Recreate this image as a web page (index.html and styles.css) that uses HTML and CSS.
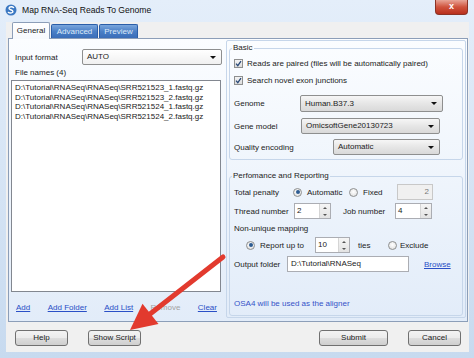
FILE: index.html
```html
<!DOCTYPE html>
<html lang="en">
<head>
    <meta charset="UTF-8">
    <title>Map RNA-Seq Reads To Genome</title>
    <link rel="stylesheet" href="styles.css">
</head>
<body>
    <div class="window">
        <div class="titlebar">
            <svg class="app-icon" width="12" height="12" viewBox="0 0 12 12">
                <circle cx="6" cy="6" r="5.5" fill="#3b78c2"/>
                <path d="M8.6 3.6 C7.4 2.3 4.6 2.4 4 4.2 C3.5 5.8 7.6 5.6 7.9 7.3 C8.2 9 5.2 9.6 3.4 8.4" fill="none" stroke="#fff" stroke-width="1.4" stroke-linecap="round"/>
            </svg>
            <span class="title">Map RNA-Seq Reads To Genome</span>
            <div class="close-btn">x</div>
        </div>

        <div class="client">
            <div class="tabs">
                <div class="tab tab-active">General</div>
                <div class="tab tab-advanced">Advanced</div>
                <div class="tab tab-preview">Preview</div>
            </div>

            <div class="tab-page">
                <div class="left-col">
                    <div class="format-row">
                        <span class="field-label">Input format</span>
                        <div class="combo combo-auto"><span>AUTO</span><i class="drop"></i></div>
                    </div>
                    <div class="files-label">File names (4)</div>
                    <div class="listbox">
                        <div>D:\Tutorial\RNASeq\RNASeq\SRR521523_1.fastq.gz</div>
                        <div>D:\Tutorial\RNASeq\RNASeq\SRR521523_2.fastq.gz</div>
                        <div>D:\Tutorial\RNASeq\RNASeq\SRR521524_1.fastq.gz</div>
                        <div>D:\Tutorial\RNASeq\RNASeq\SRR521524_2.fastq.gz</div>
                    </div>
                    <div class="links">
                        <a>Add</a>
                        <a>Add Folder</a>
                        <a>Add List</a>
                        <a class="disabled">Remove</a>
                        <a>Clear</a>
                    </div>
                </div>

                <div class="right-panel">
                    <fieldset class="group group-basic">
                        <legend>Basic</legend>
                        <div class="check-row">
                            <span class="checkbox"><svg width="7" height="7" viewBox="0 0 7 7"><polyline points="1,3.6 2.8,5.6 6,1.2" fill="none" stroke="#2a4a78" stroke-width="1.3"/></svg></span>
                            <span>Reads are paired (files will be automatically paired)</span>
                        </div>
                        <div class="check-row">
                            <span class="checkbox"><svg width="7" height="7" viewBox="0 0 7 7"><polyline points="1,3.6 2.8,5.6 6,1.2" fill="none" stroke="#2a4a78" stroke-width="1.3"/></svg></span>
                            <span>Search novel exon junctions</span>
                        </div>
                        <div class="row row-genome">
                            <span class="lbl lbl-genome">Genome</span>
                            <div class="combo combo-genome"><span>Human.B37.3</span><i class="drop"></i></div>
                        </div>
                        <div class="row row-model">
                            <span class="lbl lbl-model">Gene model</span>
                            <div class="combo combo-model"><span>OmicsoftGene20130723</span><i class="drop"></i></div>
                        </div>
                        <div class="row row-quality">
                            <span class="lbl lbl-quality">Quality encoding</span>
                            <div class="combo combo-quality"><span>Automatic</span><i class="drop"></i></div>
                        </div>
                    </fieldset>

                    <fieldset class="group group-perf">
                        <legend>Perfomance and Reporting</legend>
                        <div class="row row-penalty">
                            <span class="lbl lbl-penalty">Total penalty</span>
                            <span class="opt opt-auto"><span class="radio checked"></span>Automatic</span>
                            <span class="opt opt-fixed"><span class="radio"></span>Fixed</span>
                            <div class="textbox textbox-fixed">2</div>
                        </div>
                        <div class="row row-thread">
                            <span class="lbl lbl-thread">Thread number</span>
                            <div class="spin"><span class="spin-val">2</span><span class="spin-btns"><i class="up"></i><i class="down"></i></span></div>
                            <span class="lbl lbl-job">Job number</span>
                            <div class="spin"><span class="spin-val">4</span><span class="spin-btns"><i class="up"></i><i class="down"></i></span></div>
                        </div>
                        <div class="nonunique">Non-unique mapping</div>
                        <div class="row row-report">
                            <span class="opt opt-report"><span class="radio checked"></span>Report up to</span>
                            <div class="spin spin-ties"><span class="spin-val">10</span><span class="spin-btns"><i class="up"></i><i class="down"></i></span></div>
                            <span class="ties">ties</span>
                            <span class="opt opt-exclude"><span class="radio"></span>Exclude</span>
                        </div>
                        <div class="row row-output">
                            <span class="lbl lbl-output">Output folder</span>
                            <div class="textbox textbox-output">D:\Tutorial\RNASeq</div>
                            <a class="browse">Browse</a>
                        </div>
                        <div class="aligner-note">OSA4 will be used as the aligner</div>
                    </fieldset>
                </div>
            </div>

            <div class="button-row">
                <button class="btn btn-help">Help</button>
                <button class="btn btn-script">Show Script</button>
                <span class="spacer"></span>
                <button class="btn btn-submit">Submit</button>
                <button class="btn btn-cancel">Cancel</button>
            </div>
        </div>
    </div>

    <!-- red callout arrow drawn over the dialog -->
    <svg class="callout" width="474" height="358" viewBox="0 0 474 358">
        <line x1="223" y1="257" x2="150" y2="314" stroke="#e23a2e" stroke-width="5" stroke-linecap="round"/>
        <polygon points="130,330 158.5,324.1 142.5,303.7" fill="#e23a2e"/>
    </svg>
</body>
</html>
```

FILE: styles.css
```css
body {
    margin: 0;
    width: 474px;
    height: 358px;
    overflow: hidden;
    font-family: "Liberation Sans", Arial, sans-serif;
    font-size: 8px;
    color: #222;
    position: relative;
}

.window {
    width: 474px;
    height: 358px;
    box-sizing: border-box;
    padding: 0 5px 6px 6px;
    background: linear-gradient(#e4eefa, #c7daef);
    display: flex;
    flex-direction: column;
}

.titlebar {
    height: 22px;
    display: flex;
    align-items: flex-start;
    position: relative;
}
.app-icon {
    margin: 4px 0 0 -1px;
}
.title {
    margin: 4px 0 0 5px;
    font-size: 8.6px;
    line-height: 12px;
    color: #111;
}
.close-btn {
    margin-left: auto;
    margin-right: 1px;
    width: 33px;
    height: 15px;
    box-sizing: border-box;
    border: 1px solid #8c3325;
    border-top: none;
    border-radius: 0 0 4px 4px;
    background: linear-gradient(#e8a597, #d0533d 50%, #b9301c);
    color: #fff;
    font-weight: bold;
    font-size: 9px;
    line-height: 13px;
    text-align: center;
}

.client {
    flex: 1;
    background: #f0f0f0;
    display: flex;
    flex-direction: column;
}

/* tabs */
.tabs {
    display: flex;
    height: 16px;
    padding-left: 6px;
    align-items: flex-end;
}
.tab {
    box-sizing: border-box;
    height: 14px;
    line-height: 13px;
    text-align: center;
    border: 1px solid #2b5ea8;
    border-bottom: none;
    border-radius: 2px 2px 0 0;
    background: linear-gradient(#7aa6dd, #4a7fc6 50%, #3a6db8);
    color: #dde9f8;
    margin-left: 1px;
}
.tab-active {
    width: 38px;
    height: 17px;
    margin-left: 0;
    margin-bottom: -1px;
    line-height: 15px;
    background: linear-gradient(#ffffff, #f6f9fd);
    border-color: #8c9eb8;
    color: #222;
    position: relative;
    z-index: 1;
}
.tab-advanced {
    width: 47px;
}
.tab-preview {
    width: 39px;
}

.tab-page {
    height: 284px;
    box-sizing: border-box;
    margin: 0 1px 0 2px;
    border: 1px solid #8c9eb8;
    background: linear-gradient(#fbfdff, #e2ecf9);
    display: flex;
}

/* left column */
.left-col {
    width: 211px;
    padding: 10px 0 0 2px;
    display: flex;
    flex-direction: column;
}
.format-row {
    height: 16px;
    display: flex;
    align-items: center;
    justify-content: space-between;
}
.field-label {
    padding-left: 4px;
}
.files-label {
    margin-top: 3px;
    padding-left: 4px;
    height: 10px;
    line-height: 10px;
}
.listbox {
    margin-top: 2px;
    width: 210px;
    height: 212px;
    box-sizing: border-box;
    border: 1px solid #828790;
    background: #fff;
    padding: 2px 0 0 3px;
    line-height: 9.6px;
    white-space: nowrap;
}
.links {
    margin-top: 11px;
    height: 10px;
    line-height: 10px;
    padding: 0 5px;
    display: flex;
    justify-content: space-between;
}
a {
    color: #2a4fc6;
    text-decoration: underline;
}
.links a.disabled {
    color: #a3a3a3;
    text-decoration: none;
}

/* combos */
.combo {
    height: 16px;
    box-sizing: border-box;
    border: 1px solid #8e8f8f;
    border-radius: 2px;
    background: linear-gradient(#f6f6f6, #e6e6e6 50%, #d9d9d9);
    display: flex;
    align-items: center;
    padding: 0 5px 0 4px;
    line-height: 10px;
}
.combo span {
    flex: 1;
}
.drop {
    width: 0;
    height: 0;
    border-left: 3px solid transparent;
    border-right: 3px solid transparent;
    border-top: 3px solid #111;
}
.combo-auto {
    width: 140px;
    background: linear-gradient(#ffffff, #f0f0f0);
}
.combo-genome {
    width: 143px;
    height: 17px;
}
.combo-model {
    width: 139px;
    margin-left: 1px;
}
.combo-quality {
    width: 107px;
}

/* right side */
.right-panel {
    margin: 1px 0 0 4px;
    width: 240px;
    height: 278px;
    box-sizing: border-box;
    border: 1px solid #c6d6ea;
    border-radius: 2px;
    padding: 2px 2px 0 2px;
}
.group {
    margin: 0;
    padding: 0 4px;
    border: 1px solid #c6d6ea;
    border-radius: 3px;
    min-inline-size: 0;
}
.group legend {
    padding: 0 1px;
    margin-left: -2px;
    line-height: 10px;
    font-size: 8px;
}
.group-basic {
    height: 117px;
    box-sizing: border-box;
}
.group-perf {
    margin-top: 11px;
    height: 145px;
    box-sizing: border-box;
}

.check-row {
    display: flex;
    align-items: center;
    height: 17px;
}
.check-row:first-of-type {
    margin-top: 2px;
}
.checkbox {
    width: 9px;
    height: 9px;
    box-sizing: border-box;
    border: 1px solid #8e8f8f;
    background: linear-gradient(#f4f4f4, #dcdcdc);
    margin-right: 4px;
    display: flex;
    align-items: center;
    justify-content: center;
}

.row {
    display: flex;
    align-items: center;
    height: 16px;
}
.lbl {
    flex: none;
}
.row-genome {
    margin-top: 6px;
    height: 17px;
}
.row-model {
    margin-top: 6px;
}
.row-quality {
    margin-top: 5px;
}
.lbl-genome,
.lbl-model {
    width: 66px;
}
.lbl-quality {
    width: 99px;
}

.row-penalty {
    margin-top: 3px;
}
.lbl-penalty {
    width: 59px;
}
.opt {
    display: flex;
    align-items: center;
    flex: none;
}
.opt-auto {
    width: 56px;
}
.opt-fixed {
    width: 48px;
}
.radio {
    width: 9px;
    height: 9px;
    box-sizing: border-box;
    border: 1px solid #8e8f8f;
    border-radius: 50%;
    background: radial-gradient(circle at 50% 40%, #ffffff, #dcdcdc);
    margin-right: 5px;
    display: flex;
    align-items: center;
    justify-content: center;
    flex: none;
}
.radio.checked::after {
    content: "";
    width: 4px;
    height: 4px;
    border-radius: 50%;
    background: #2d5c92;
}
.textbox {
    height: 16px;
    box-sizing: border-box;
    border: 1px solid #abadb3;
    background: #fff;
    line-height: 14px;
    padding: 0 3px;
    white-space: nowrap;
}
.textbox-fixed {
    width: 36px;
    text-align: right;
    background: #f0f0f0;
    color: #777;
    border-color: #c8c8c8;
}

.row-thread {
    margin-top: 3px;
}
.lbl-thread {
    width: 60px;
}
.lbl-job {
    margin-left: 12px;
    width: 52px;
}
.spin {
    width: 37px;
    height: 16px;
    box-sizing: border-box;
    border: 1px solid #abadb3;
    background: #fff;
    display: flex;
}
.spin-val {
    flex: 1;
    padding-left: 2px;
    line-height: 14px;
}
.spin-btns {
    width: 10px;
    display: flex;
    flex-direction: column;
    border-left: 1px solid #d5d5d5;
    background: linear-gradient(#f5f5f5, #e3e3e3);
}
.spin-btns i {
    flex: 1;
    display: flex;
    align-items: center;
    justify-content: center;
}
.spin-btns .up::after {
    content: "";
    border-left: 2px solid transparent;
    border-right: 2px solid transparent;
    border-bottom: 2px solid #555;
}
.spin-btns .down::after {
    content: "";
    border-left: 2px solid transparent;
    border-right: 2px solid transparent;
    border-top: 2px solid #555;
}

.nonunique {
    margin-top: 5px;
    height: 10px;
    line-height: 10px;
}
.row-report {
    margin-top: 3px;
}
.opt-report {
    margin-left: 12px;
    width: 69px;
}
.spin-ties {
    width: 35px;
}
.ties {
    margin-left: 8px;
    width: 30px;
}
.opt-exclude .radio {
    margin-right: 3px;
}

.row-output {
    margin-top: 3px;
}
.lbl-output {
    width: 53px;
}
.textbox-output {
    width: 122px;
}
.browse {
    margin-left: 15px;
}
.aligner-note {
    margin-top: 27px;
    height: 10px;
    line-height: 10px;
    color: #3552c8;
}

/* bottom buttons */
.button-row {
    flex: 1;
    display: flex;
    align-items: center;
    padding: 1px 8px 0 9px;
}
.spacer {
    flex: 1;
}
.btn {
    height: 16px;
    width: 53px;
    box-sizing: border-box;
    border: 1px solid #707070;
    border-radius: 3px;
    background: linear-gradient(#f3f3f3, #ebebeb 50%, #dddddd 51%, #cfcfcf);
    font-family: "Liberation Sans", Arial, sans-serif;
    font-size: 8px;
    color: #222;
    padding: 0;
}
.btn-script {
    margin-left: 20px;
}
.btn-submit {
    width: 69px;
}
.btn-cancel {
    margin-left: 20px;
}

.callout {
    position: absolute;
    left: 0;
    top: 0;
    pointer-events: none;
}
```
